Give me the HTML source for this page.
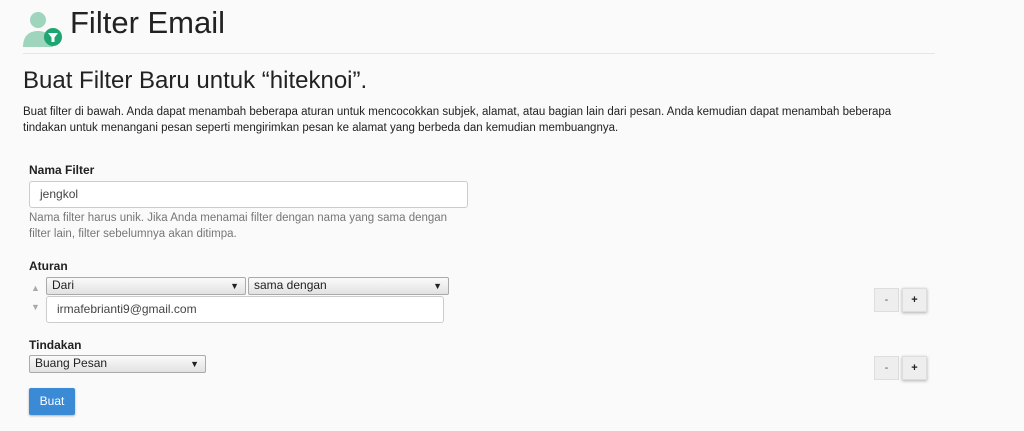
<!DOCTYPE html>
<html><head><meta charset="utf-8"><style>
body{margin:0;background:#fafafa;font-family:"Liberation Sans",sans-serif;color:#333;width:1024px;height:431px;overflow:hidden;position:relative}
.a{position:absolute}
.sel{position:absolute;border:1px solid #aaa;border-radius:2px;background:linear-gradient(#fafafa,#e2e2e2);font-size:12px;line-height:15px;padding-left:5px;box-sizing:border-box;color:#222}
.sel:after{content:"▼";position:absolute;right:6px;top:1px;font-size:9px}
.inp{position:absolute;border:1px solid #ccc;border-radius:3px;background:#fff;box-sizing:border-box;font-size:12px;padding-left:10px;color:#444}
.btn{position:absolute;width:25px;height:24px;border:1px solid #ddd;background:#eee;box-sizing:border-box;text-align:center;font-size:11px;line-height:22px;color:#555}
.b2{box-shadow:0 1px 3px rgba(0,0,0,.3);color:#222;font-weight:bold}
</style></head><body>
<svg class="a" style="left:23px;top:9px" width="42" height="40" viewBox="0 0 42 40">
<circle cx="15" cy="11" r="8" fill="#9ed5bc"/>
<path d="M0 38 C0 26 7 22 15 22 C23 22 30 26 30 38Z" fill="#9ed5bc"/>
<circle cx="30" cy="28" r="9" fill="#1ea672"/>
<path d="M25 24 L35 24 L31.5 28.5 L31.5 33 L28.5 33 L28.5 28.5Z" fill="#fff"/>
</svg>
<div class="a" style="left:70px;top:5px;font-size:31px;color:#222">Filter Email</div>
<div class="a" style="left:23px;top:53px;width:912px;height:1px;background:#e6e6e6"></div>
<div class="a" style="left:23px;top:67px;font-size:24px;color:#222">Buat Filter Baru untuk “hiteknoi”.</div>
<div class="a" style="left:23px;top:104px;width:900px;font-size:11.5px;line-height:16px;color:#222">Buat filter di bawah. Anda dapat menambah beberapa aturan untuk mencocokkan subjek, alamat, atau bagian lain dari pesan. Anda kemudian dapat menambah beberapa tindakan untuk menangani pesan seperti mengirimkan pesan ke alamat yang berbeda dan kemudian membuangnya.</div>
<div class="a" style="left:29px;top:163px;font-size:12px;font-weight:bold;color:#222">Nama Filter</div>
<div class="inp" style="left:29px;top:181px;width:439px;height:27px;line-height:25px">jengkol</div>
<div class="a" style="left:29px;top:210px;width:435px;font-size:11.5px;line-height:16px;color:#777">Nama filter harus unik. Jika Anda menamai filter dengan nama yang sama dengan filter lain, filter sebelumnya akan ditimpa.</div>
<div class="a" style="left:29px;top:259px;font-size:12px;font-weight:bold;color:#222">Aturan</div>
<div class="sel" style="left:46px;top:277px;width:200px;height:18px">Dari</div>
<div class="sel" style="left:248px;top:277px;width:201px;height:18px">sama dengan</div>
<div class="a" style="left:31px;top:283px;font-size:9px;color:#aaa">▲</div>
<div class="a" style="left:31px;top:302px;font-size:9px;color:#aaa">▼</div>
<div class="inp" style="left:46px;top:296px;width:398px;height:27px;line-height:25px">irmafebrianti9@gmail.com</div>
<div class="btn" style="left:874px;top:288px">-</div>
<div class="btn b2" style="left:902px;top:288px">+</div>
<div class="a" style="left:29px;top:338px;font-size:12px;font-weight:bold;color:#222">Tindakan</div>
<div class="sel" style="left:29px;top:355px;width:177px;height:18px">Buang Pesan</div>
<div class="btn" style="left:874px;top:356px">-</div>
<div class="btn b2" style="left:902px;top:356px">+</div>
<div class="a" style="left:29px;top:388px;width:46px;height:27px;background:#3a8ad6;border-radius:2px;box-shadow:0 1px 2px rgba(0,0,0,.3);color:#fff;font-size:12px;text-align:center;line-height:27px">Buat</div>
</body></html>
